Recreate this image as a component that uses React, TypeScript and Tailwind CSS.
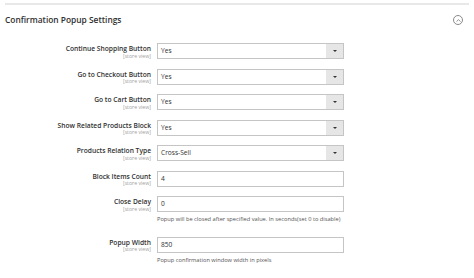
import { ChevronUp } from 'lucide-react';

type Field = {
  label: string;
  value: string;
  kind: 'select' | 'input';
  note?: string;
};

const FIELDS: Field[] = [
  { label: 'Continue Shopping Button', value: 'Yes', kind: 'select' },
  { label: 'Go to Checkout Button', value: 'Yes', kind: 'select' },
  { label: 'Go to Cart Button', value: 'Yes', kind: 'select' },
  { label: 'Show Related Products Block', value: 'Yes', kind: 'select' },
  { label: 'Products Relation Type', value: 'Cross-Sell', kind: 'select' },
  { label: 'Block Items Count', value: '4', kind: 'input' },
  {
    label: 'Close Delay',
    value: '0',
    kind: 'input',
    note: 'Popup will be closed after specified value. In seconds(set 0 to disable)',
  },
  {
    label: 'Popup Width',
    value: '850',
    kind: 'input',
    note: 'Popup confirmation window width in pixels',
  },
];

const Row = ({ field }: { field: Field }) => (
  <div className="flex items-start">
    <div className="w-[151px] shrink-0 text-right leading-none">
      <div className="mt-[3px] text-[6.7px] font-semibold text-[#303030]">{field.label}</div>
      <div className="mt-[1px] text-[5.2px] text-[#a0a0a0]">[store view]</div>
    </div>
    <div className="ml-[6px] w-[187px]">
      <div className="flex h-[16px] border border-[#adadad]/70 bg-white">
        <div className="flex flex-1 items-center pl-[3px] text-[6.6px] text-[#303030]">{field.value}</div>
        {field.kind === 'select' && (
          <div className="flex w-[17px] items-center justify-center bg-[#e6e6e6]">
            <div className="h-0 w-0 border-x-[2px] border-t-[2.5px] border-x-transparent border-t-[#333]" />
          </div>
        )}
      </div>
      {field.note && (
        <div className="mt-[3px] mb-[4px] text-[5.7px] leading-[8px] text-[#555]">{field.note}</div>
      )}
    </div>
  </div>
);

const App = () => {
  return (
    <div
      className="h-[278px] w-[474px] bg-white pt-[3px]"
      style={{ fontFamily: '"Open Sans", "Noto Sans", sans-serif' }}
    >
      <div className="mx-[5px] border-t-2 border-[#e8e8e8]" />
      <div className="flex items-center justify-between pl-[5px] pr-[11px] pt-[9px]">
        <h2 className="text-[8.4px] font-semibold text-[#303030]">Confirmation Popup Settings</h2>
        <div className="flex h-[10px] w-[10px] items-center justify-center rounded-full border border-[#8a8a8a]">
          <ChevronUp className="h-[7px] w-[7px] text-[#6a6a6a]" strokeWidth={2.5} />
        </div>
      </div>
      <div className="mt-[16.5px] flex flex-col gap-[9.5px]">
        {FIELDS.map(f => (
          <Row key={f.label} field={f} />
        ))}
      </div>
      <div className="mx-[5px] mt-[20px] border-t border-[#e3e3e3]" />
    </div>
  );
};

export default App;
